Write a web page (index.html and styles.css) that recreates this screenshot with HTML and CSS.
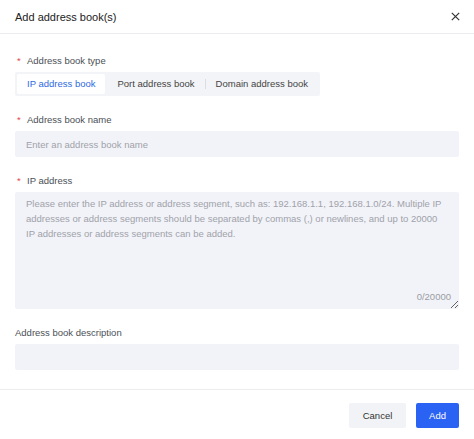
FILE: index.html
```html
<!DOCTYPE html>
<html>
<head>
<meta charset="utf-8">
<link rel="stylesheet" href="styles.css">
</head>
<body>
<div class="dialog">
  <div class="header">
    <div class="title">Add address book(s)</div>
    <svg class="close" width="9" height="9" viewBox="0 0 9 9"><path d="M0.8 0.8 L8.2 8.2 M8.2 0.8 L0.8 8.2" stroke="#333" stroke-width="1.2" fill="none"/></svg>
  </div>
  <div class="body">
    <div class="item">
      <div class="label"><span class="req">*</span>Address book type</div>
      <div class="seg">
        <div class="tab active">IP address book</div>
        <div class="tab">Port address book</div>
        <div class="sep"></div>
        <div class="tab">Domain address book</div>
      </div>
    </div>
    <div class="item">
      <div class="label"><span class="req">*</span>Address book name</div>
      <input class="input" type="text" placeholder="Enter an address book name">
    </div>
    <div class="item">
      <div class="label"><span class="req">*</span>IP address</div>
      <div class="ta-wrap">
        <textarea class="ta" placeholder="Please enter the IP address or address segment, such as: 192.168.1.1, 192.168.1.0/24. Multiple IP addresses or address segments should be separated by commas (,) or newlines, and up to 20000 IP addresses or address segments can be added."></textarea>
        <span class="count">0/20000</span>
      </div>
    </div>
    <div class="item last">
      <div class="label">Address book description</div>
      <input class="input" type="text">
    </div>
  </div>
  <div class="footer">
    <button class="btn cancel">Cancel</button>
    <button class="btn primary">Add</button>
  </div>
</div>
</body>
</html>
```
FILE: styles.css
```css
html, body {
  margin: 0;
  padding: 0;
  background: #fff;
}
body {
  font-family: "Liberation Sans", Arial, sans-serif;
  font-size: 9.5px;
  color: #4b4f56;
}
.dialog {
  width: 474px;
}
.header {
  height: 33px;
  border-bottom: 1px solid #ececef;
  display: flex;
  align-items: center;
  justify-content: space-between;
  padding: 0 15px;
}
.title {
  font-size: 11px;
  color: #222;
}
.close {
  display: block;
  margin-right: -1px;
}
.body {
  padding: 19px 15px 19px;
}
.item {
  margin-bottom: 16px;
}
.item.last {
  margin-bottom: 0;
}
.label {
  line-height: 15px;
  height: 15px;
  margin-bottom: 4px;
  color: #4b4f56;
}
.req {
  color: #e5484d;
  margin-left: 2px;
  margin-right: 4px;
  display: inline-block;
  width: 6px;
}
.seg {
  display: inline-flex;
  align-items: center;
  background: #f3f4f7;
  border-radius: 2px;
  padding: 2px;
  height: 20px;
}
.tab {
  height: 20px;
  line-height: 20px;
  padding: 0 10px;
  color: #444;
}
.tab.active {
  background: #fff;
  color: #2f6ae3;
  border-radius: 2px;
  margin-right: 2px;
}
.sep {
  width: 1px;
  height: 10px;
  background: #dcdde1;
}
.input {
  display: block;
  box-sizing: border-box;
  width: 444px;
  height: 26px;
  border: none;
  outline: none;
  background: #f2f3f8;
  border-radius: 2px;
  padding: 0 11px;
  font-family: inherit;
  font-size: 9.5px;
  color: #333;
}
.input::placeholder {
  color: #9fa2aa;
}
.ta-wrap {
  position: relative;
  width: 444px;
  height: 117px;
}
.ta {
  display: block;
  box-sizing: border-box;
  width: 444px;
  height: 117px;
  border: none;
  outline: none;
  background: #f2f3f8;
  border-radius: 2px;
  padding: 4px 15px 4px 11px;
  font-family: inherit;
  font-size: 9.5px;
  line-height: 15px;
  color: #333;
  resize: vertical;
  margin: 0;
}
.ta::placeholder {
  color: #9fa2aa;
}
.count {
  position: absolute;
  right: 8px;
  bottom: 6px;
  color: #9a9ca3;
  font-size: 9.5px;
  line-height: 12px;
}
.footer {
  border-top: 1px solid #ececef;
  padding: 13px 15px;
  display: flex;
  justify-content: flex-end;
  gap: 10px;
}
.btn {
  height: 25px;
  border: none;
  border-radius: 2px;
  font-family: inherit;
  font-size: 9.5px;
  padding: 0;
  margin: 0;
}
.cancel {
  width: 57px;
  background: #f2f3f6;
  color: #333;
}
.primary {
  width: 43px;
  background: #2a62f4;
  color: #fff;
}
```
